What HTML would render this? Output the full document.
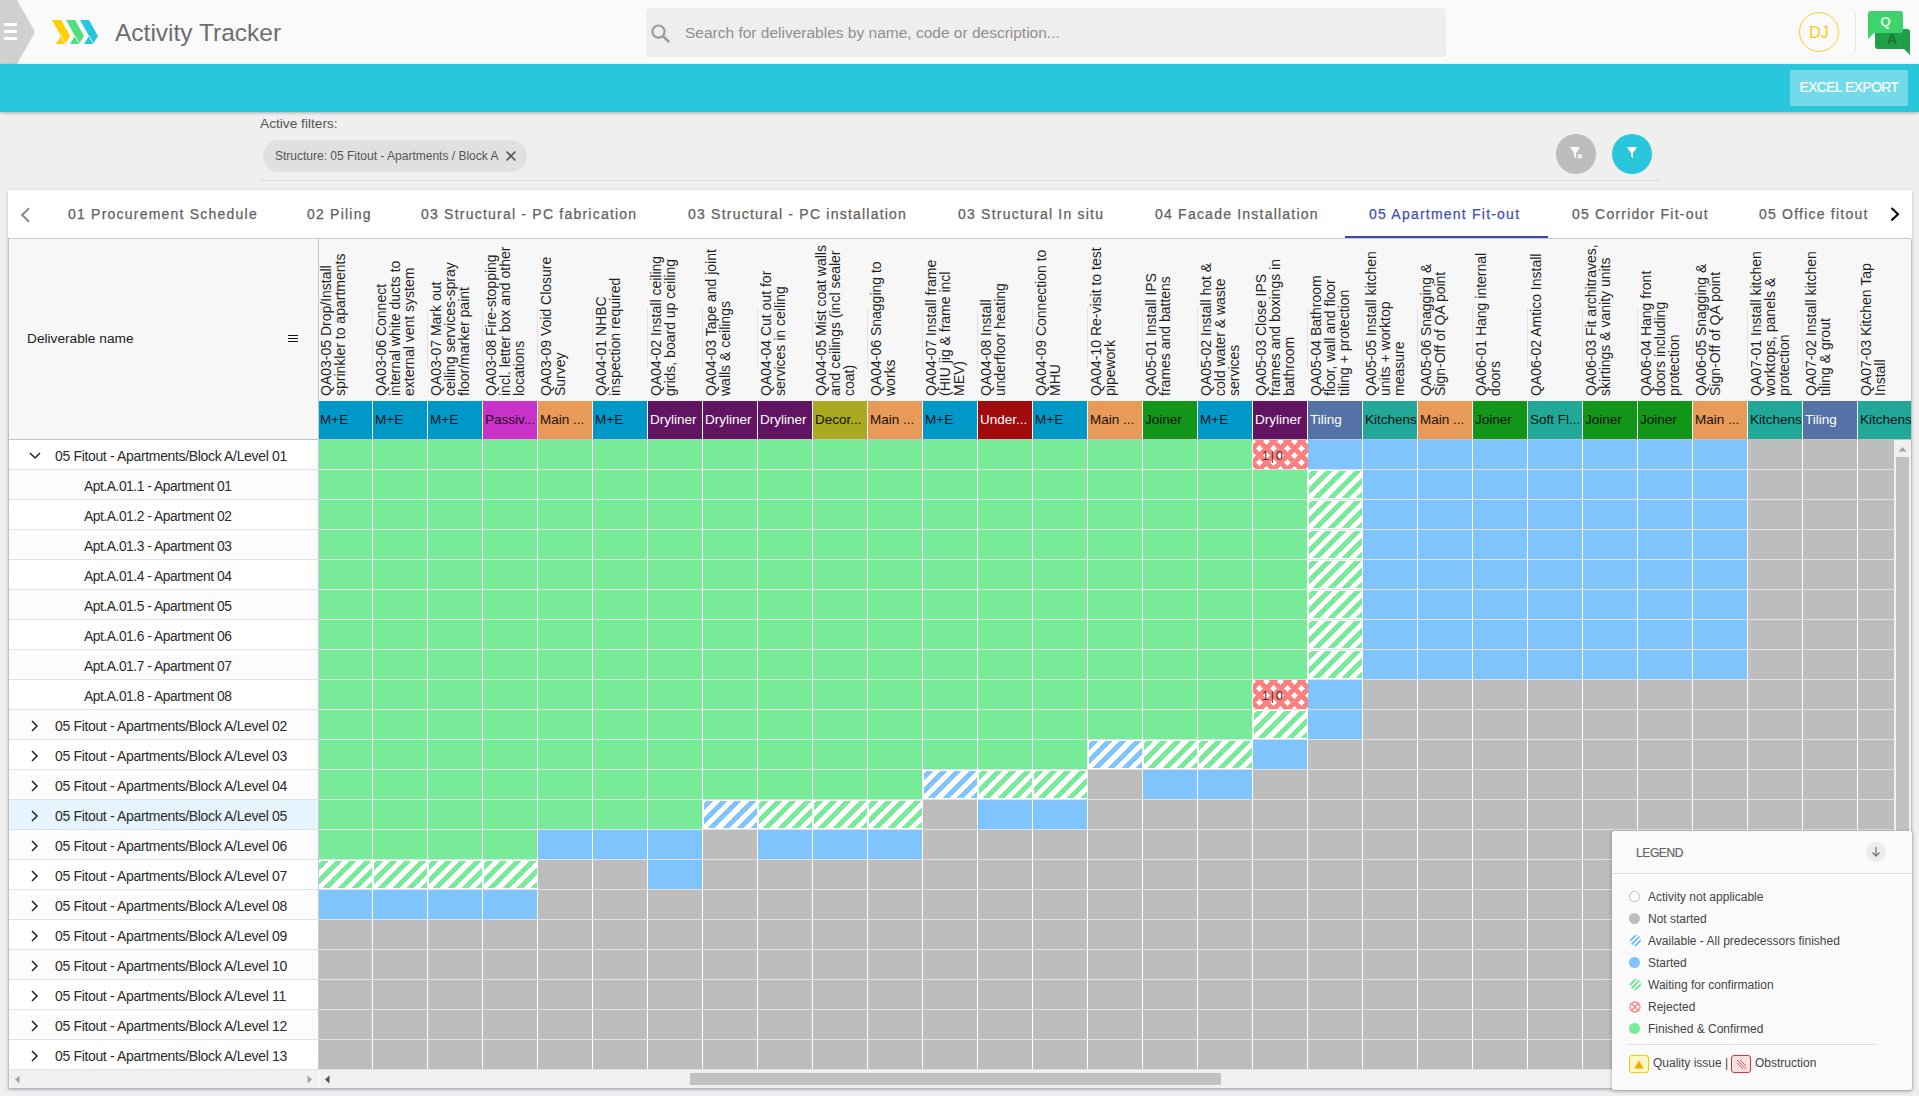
<!DOCTYPE html>
<html><head><meta charset="utf-8">
<style>
*{box-sizing:border-box}
html,body{margin:0;padding:0}
body{width:1919px;height:1096px;overflow:hidden;position:relative;background:#efefef;font-family:"Liberation Sans",sans-serif;color:#333}
.abs{position:absolute}
#top{position:absolute;left:0;top:0;width:1919px;height:64px;background:#fafafa}
#title{position:absolute;left:115px;top:19px;font-size:24.5px;color:#6e6e6e;white-space:nowrap}
#search{position:absolute;left:646px;top:8px;width:800px;height:49px;background:#eeeeee;border-radius:4px}
#search .ph{position:absolute;left:39px;top:16px;font-size:15.5px;color:#8f8f8f;white-space:nowrap}
#avatar{position:absolute;left:1799px;top:12px;width:40px;height:40px;border:1px solid #fdd017;border-radius:50%;color:#f9c80e;font-size:16px;text-align:center;line-height:40px}
#vsep{position:absolute;left:1855px;top:12px;width:1px;height:40px;background:#e6e6e6}
#teal{position:absolute;left:0;top:64px;width:1919px;height:48px;background:#28c7dc;box-shadow:0 1px 3px rgba(0,0,0,.28)}
#excel{position:absolute;left:1790px;top:6px;width:118px;height:36px;background:#72dae9;border-radius:2px;color:#fff;font-size:13.8px;text-align:center;line-height:35px;letter-spacing:-0.5px;-webkit-text-stroke:0.2px #fff}
#af{position:absolute;left:260px;top:116px;font-size:13.7px;color:#555;white-space:nowrap}
#chip{position:absolute;left:263px;top:140px;width:264px;height:32px;background:#e0e0e0;border-radius:16px}
#chip span{position:absolute;left:12px;top:9px;font-size:12px;color:#555;white-space:nowrap}
#fline{position:absolute;left:260px;top:180px;width:1400px;height:1px;background:#dcdcdc}
.fbtn{position:absolute;top:134px;width:40px;height:40px;border-radius:50%}
#card{position:absolute;left:8px;top:190px;width:1904px;height:899px;background:#fff;border-radius:2px;box-shadow:0 1px 3px rgba(0,0,0,.25)}
.tab{position:absolute;top:206px;font-size:14px;font-weight:normal;color:#616161;-webkit-text-stroke:0.25px currentColor;letter-spacing:1.22px;white-space:nowrap}
#ul{position:absolute;left:1345px;top:236px;width:203px;height:2px;background:#3949ab}
#thead{position:absolute;left:8px;top:238px;width:1903px;height:201px;background:#f7f7f7;border-top:1px solid #c5c9d1}
#hb{position:absolute;left:8px;top:439px;width:1903px;height:1px;background:#bfc3ca}
#lpb{position:absolute;left:318px;top:239px;width:1px;height:831px;background:#c5c9d1}
#lb{position:absolute;left:8px;top:239px;width:1px;height:850px;background:#bcc2cc}
#rb{position:absolute;left:1911px;top:239px;width:1px;height:850px;background:#bcc2cc}
#bb{position:absolute;left:8px;top:1088px;width:1904px;height:1px;background:#b4bac4}
#dn{position:absolute;left:27px;top:331px;font-size:13.7px;color:#222;white-space:nowrap}
#grid{position:absolute;left:318px;top:239px;width:1593px;height:831px;overflow:hidden}
.hcol{position:absolute;top:0;width:55px;height:162px}
.rot{position:absolute;left:0;top:162px;transform-origin:0 0;transform:rotate(-90deg);white-space:nowrap;font-size:14px;line-height:14px;color:#1e1e1e;width:160px;padding-top:1px;padding-left:5px}
.hsep{position:absolute;top:70px;width:1px;height:60px;background:#dfe1ea}
.trd{position:absolute;top:162px;width:54px;height:38px;font-size:13.5px;line-height:38px;padding-left:2px;white-space:nowrap;overflow:hidden}
#cells{position:absolute;left:0;top:201px;width:1576px;height:630px;background:#dfe2e8;overflow:hidden}
.c{position:absolute;display:block;width:55px;height:29px;border-right:1px solid #fff;font-style:normal}
.c.g{background:#78eb99}
.c.b{background:#7fc4fd}
.c.x{background:#bdbdbd}
.c.gh,.c.bh{background-color:#fff}
.c.gh::after,.c.bh::after{content:"";position:absolute;left:1px;top:1px;right:0;bottom:1px}
.c.gh::after{background:repeating-linear-gradient(135deg,#fff 0 2.12px,#78eb99 2.12px 7.07px,#fff 7.07px 9.9px)}
.c.bh::after{background:repeating-linear-gradient(135deg,#fff 0 2.12px,#7fc4fd 2.12px 7.07px,#fff 7.07px 9.9px)}
.c.r{border-right:0;background:repeating-linear-gradient(135deg,transparent 0 3.18px,#ff7f7f 3.18px 8.13px,transparent 8.13px 9.9px),repeating-linear-gradient(45deg,transparent 0 1.77px,#ff7f7f 1.77px 6.72px,transparent 6.72px 9.9px),#fff}
.rt{position:absolute;left:9px;top:9px;font-size:12.5px;color:#3a3a3a;letter-spacing:1.8px;white-space:nowrap}
.lrow{position:absolute;left:9px;width:309px;height:30px;background:#fff;border-bottom:1px solid #dfe2e8}
.lrow.alt{background:#fcfcfc}
.lrow.hl{background:#e6f4fe}
.lt{position:absolute;top:8px;font-size:14px;letter-spacing:-0.34px;color:#2b2b2b;white-space:nowrap}
.chev{position:absolute;left:20px;top:9px}
#lrows{position:absolute;left:0;top:440px}
#vs{position:absolute;left:1894px;top:440px;width:17px;height:630px;background:#f0f0f0}
#hs1{position:absolute;left:9px;top:1070px;width:309px;height:18px;background:#f0f0f0}
#hs2{position:absolute;left:319px;top:1070px;width:1592px;height:18px;background:#f0f0f0}
#legend{position:absolute;left:1612px;top:831px;width:300px;height:259px;background:#fafafa;box-shadow:0 1px 4px rgba(0,0,0,.3);border-radius:2px}
#legend .lh{position:absolute;left:24px;top:15px;font-size:12px;color:#666;letter-spacing:-0.4px;-webkit-text-stroke:0.2px #666}
#legend .li{position:absolute;left:36px;font-size:12px;color:#444;white-space:nowrap}
#legend .dot{position:absolute;left:17px;width:11px;height:11px;border-radius:50%}
</style></head><body>
<div id="top">
  <svg class="abs" style="left:0;top:0" width="36" height="64" viewBox="0 0 36 64"><polygon points="0,0 17,0 35,32 17,64 0,64" fill="#d0d0d0"/><rect x="4" y="23" width="13" height="3" fill="#fff"/><rect x="4" y="30" width="13" height="3" fill="#fff"/><rect x="4" y="37" width="13" height="3" fill="#fff"/></svg>
  <svg class="abs" style="left:50px;top:18px" width="50" height="28" viewBox="0 0 50 28">
    <polygon points="2,2 11,2 20,18 15,26 6,26 11,18" fill="#ffd000"/>
    <polygon points="16,2 25,2 34,18 29,26 20,26 25,18" fill="#50e080"/>
    <polygon points="30,2 39,2 48,18 43,26 34,26 39,18" fill="#29c6dc"/>
    <path d="M11 18 L15.5 26 M25 18 L29.5 26 M39 18 L43.5 26" stroke="#fafafa" stroke-width="0.9"/>
  </svg>
  <div id="title">Activity Tracker</div>
  <div id="search">
    <svg class="abs" style="left:5px;top:15px" width="22" height="22" viewBox="0 0 22 22"><circle cx="7.5" cy="8.6" r="6.1" fill="none" stroke="#9a9a9a" stroke-width="2.2"/><line x1="11.8" y1="13" x2="18.2" y2="19.2" stroke="#9a9a9a" stroke-width="2.5"/></svg>
    <div class="ph">Search for deliverables by name, code or description...</div>
  </div>
  <div id="avatar">DJ</div>
  <div id="vsep"></div>
  <svg class="abs" style="left:1866px;top:10px" width="46" height="46" viewBox="0 0 46 46">
    <path d="M12 19 h29 a3 3 0 0 1 3 3 v23 l-6 -6 h-26 a3 3 0 0 1 -3 -3 v-14 a3 3 0 0 1 3 -3 z" fill="#1f9f47"/>
    <path d="M5 1 h29 a3 3 0 0 1 3 3 v16 a3 3 0 0 1 -3 3 h-26 l-6 6 v-25 a3 3 0 0 1 3 -3 z" fill="#3fd46b"/>
    <text x="19.5" y="15.5" font-size="13.5" font-weight="bold" fill="#d8f7df" text-anchor="middle" font-family="Liberation Sans">Q</text>
    <text x="26" y="33.5" font-size="14" font-weight="bold" fill="#167434" text-anchor="middle" font-family="Liberation Sans">A</text>
  </svg>
</div>
<div id="teal"><div id="excel">EXCEL EXPORT</div></div>
<div id="af">Active filters:</div>
<div id="chip"><span>Structure: 05 Fitout - Apartments / Block A</span>
  <svg class="abs" style="left:242px;top:10px" width="12" height="12" viewBox="0 0 12 12"><path d="M1.5 1.5 L10.5 10.5 M10.5 1.5 L1.5 10.5" stroke="#555" stroke-width="1.6"/></svg></div>
<div id="fline"></div>
<div class="fbtn" style="left:1556px;background:#bdbdbd"><svg class="abs" style="left:10px;top:11px" width="20" height="18" viewBox="0 0 20 18"><path d="M4 2 H14 L10 8 V13 L8 11.5 V8 Z" fill="#fff"/><path d="M11.8 9.3 l4 4 M15.8 9.3 l-4 4" stroke="#fff" stroke-width="1.3"/></svg></div>
<div class="fbtn" style="left:1612px;background:#29c6dc"><svg class="abs" style="left:10px;top:11px" width="20" height="18" viewBox="0 0 20 18"><path d="M5 2 H15 L11 8 V13 L9 11.5 V8 Z" fill="#fff"/></svg></div>
<div id="card"></div>
<svg class="abs" style="left:18px;top:205px" width="16" height="18" viewBox="0 0 16 18"><path d="M11 3.2 L4.2 10 L11 16.8" fill="none" stroke="#8a8a8a" stroke-width="2"/></svg>
<div class="tab" style="left:68px">01 Procurement Schedule</div>
<div class="tab" style="left:307px">02 Piling</div>
<div class="tab" style="left:421px">03 Structural - PC fabrication</div>
<div class="tab" style="left:688px">03 Structural - PC installation</div>
<div class="tab" style="left:958px">03 Structural In situ</div>
<div class="tab" style="left:1155px">04 Facade Installation</div>
<div class="tab" style="left:1369px;color:#3f51b5">05 Apartment Fit-out</div>
<div class="tab" style="left:1572px">05 Corridor Fit-out</div>
<div class="tab" style="left:1759px">05 Office fitout</div>
<svg class="abs" style="left:1886px;top:205px" width="16" height="18" viewBox="0 0 16 18"><path d="M5.5 3 L12 9.2 L5.5 15.4" fill="none" stroke="#111" stroke-width="2.2"/></svg>
<div id="ul"></div>
<div id="thead"></div>
<div id="dn">Deliverable name</div>
<svg class="abs" style="left:288px;top:334px" width="10" height="9" viewBox="0 0 10 9"><rect x="0" y="1" width="10" height="1" fill="#111"/><rect x="0" y="4" width="10" height="1" fill="#111"/><rect x="0" y="7" width="10" height="1" fill="#111"/></svg>
<div id="lrows">
<div class="lrow" style="top:0px"><svg class="chev" width="12" height="12" viewBox="0 0 12 12"><path d="M1 4 L6 9 L11 4" fill="none" stroke="#222" stroke-width="1.5"/></svg><span class="lt" style="left:46px">05 Fitout - Apartments/Block A/Level 01</span></div>
<div class="lrow alt" style="top:30px"><span class="lt" style="left:75px;top:9px;font-size:13.8px;letter-spacing:-0.45px">Apt.A.01.1 - Apartment 01</span></div>
<div class="lrow" style="top:60px"><span class="lt" style="left:75px;top:9px;font-size:13.8px;letter-spacing:-0.45px">Apt.A.01.2 - Apartment 02</span></div>
<div class="lrow alt" style="top:90px"><span class="lt" style="left:75px;top:9px;font-size:13.8px;letter-spacing:-0.45px">Apt.A.01.3 - Apartment 03</span></div>
<div class="lrow" style="top:120px"><span class="lt" style="left:75px;top:9px;font-size:13.8px;letter-spacing:-0.45px">Apt.A.01.4 - Apartment 04</span></div>
<div class="lrow alt" style="top:150px"><span class="lt" style="left:75px;top:9px;font-size:13.8px;letter-spacing:-0.45px">Apt.A.01.5 - Apartment 05</span></div>
<div class="lrow" style="top:180px"><span class="lt" style="left:75px;top:9px;font-size:13.8px;letter-spacing:-0.45px">Apt.A.01.6 - Apartment 06</span></div>
<div class="lrow alt" style="top:210px"><span class="lt" style="left:75px;top:9px;font-size:13.8px;letter-spacing:-0.45px">Apt.A.01.7 - Apartment 07</span></div>
<div class="lrow" style="top:240px"><span class="lt" style="left:75px;top:9px;font-size:13.8px;letter-spacing:-0.45px">Apt.A.01.8 - Apartment 08</span></div>
<div class="lrow alt" style="top:270px"><svg class="chev" width="12" height="12" viewBox="0 0 12 12" style="top:10px"><path d="M3 1 L8 6 L3 11" fill="none" stroke="#222" stroke-width="1.5"/></svg><span class="lt" style="left:46px">05 Fitout - Apartments/Block A/Level 02</span></div>
<div class="lrow" style="top:300px"><svg class="chev" width="12" height="12" viewBox="0 0 12 12" style="top:10px"><path d="M3 1 L8 6 L3 11" fill="none" stroke="#222" stroke-width="1.5"/></svg><span class="lt" style="left:46px">05 Fitout - Apartments/Block A/Level 03</span></div>
<div class="lrow alt" style="top:330px"><svg class="chev" width="12" height="12" viewBox="0 0 12 12" style="top:10px"><path d="M3 1 L8 6 L3 11" fill="none" stroke="#222" stroke-width="1.5"/></svg><span class="lt" style="left:46px">05 Fitout - Apartments/Block A/Level 04</span></div>
<div class="lrow hl" style="top:360px"><svg class="chev" width="12" height="12" viewBox="0 0 12 12" style="top:10px"><path d="M3 1 L8 6 L3 11" fill="none" stroke="#222" stroke-width="1.5"/></svg><span class="lt" style="left:46px">05 Fitout - Apartments/Block A/Level 05</span></div>
<div class="lrow alt" style="top:390px"><svg class="chev" width="12" height="12" viewBox="0 0 12 12" style="top:10px"><path d="M3 1 L8 6 L3 11" fill="none" stroke="#222" stroke-width="1.5"/></svg><span class="lt" style="left:46px">05 Fitout - Apartments/Block A/Level 06</span></div>
<div class="lrow" style="top:420px"><svg class="chev" width="12" height="12" viewBox="0 0 12 12" style="top:10px"><path d="M3 1 L8 6 L3 11" fill="none" stroke="#222" stroke-width="1.5"/></svg><span class="lt" style="left:46px">05 Fitout - Apartments/Block A/Level 07</span></div>
<div class="lrow alt" style="top:450px"><svg class="chev" width="12" height="12" viewBox="0 0 12 12" style="top:10px"><path d="M3 1 L8 6 L3 11" fill="none" stroke="#222" stroke-width="1.5"/></svg><span class="lt" style="left:46px">05 Fitout - Apartments/Block A/Level 08</span></div>
<div class="lrow" style="top:480px"><svg class="chev" width="12" height="12" viewBox="0 0 12 12" style="top:10px"><path d="M3 1 L8 6 L3 11" fill="none" stroke="#222" stroke-width="1.5"/></svg><span class="lt" style="left:46px">05 Fitout - Apartments/Block A/Level 09</span></div>
<div class="lrow alt" style="top:510px"><svg class="chev" width="12" height="12" viewBox="0 0 12 12" style="top:10px"><path d="M3 1 L8 6 L3 11" fill="none" stroke="#222" stroke-width="1.5"/></svg><span class="lt" style="left:46px">05 Fitout - Apartments/Block A/Level 10</span></div>
<div class="lrow" style="top:540px"><svg class="chev" width="12" height="12" viewBox="0 0 12 12" style="top:10px"><path d="M3 1 L8 6 L3 11" fill="none" stroke="#222" stroke-width="1.5"/></svg><span class="lt" style="left:46px">05 Fitout - Apartments/Block A/Level 11</span></div>
<div class="lrow alt" style="top:570px"><svg class="chev" width="12" height="12" viewBox="0 0 12 12" style="top:10px"><path d="M3 1 L8 6 L3 11" fill="none" stroke="#222" stroke-width="1.5"/></svg><span class="lt" style="left:46px">05 Fitout - Apartments/Block A/Level 12</span></div>
<div class="lrow" style="top:600px"><svg class="chev" width="12" height="12" viewBox="0 0 12 12" style="top:10px"><path d="M3 1 L8 6 L3 11" fill="none" stroke="#222" stroke-width="1.5"/></svg><span class="lt" style="left:46px">05 Fitout - Apartments/Block A/Level 13</span></div>
</div>
<div id="grid">
<div class="hcol" style="left:0px"><div class="rot">QA03-05 Drop/Install<br>sprinkler to apartments</div></div>
<div class="trd" style="left:0px;background:#0099c7;color:#0b1620">M+E</div>
<div class="hcol" style="left:55px"><div class="rot">QA03-06 Connect<br>internal white ducts to<br>external vent system</div></div>
<div class="hsep" style="left:54px"></div>
<div class="trd" style="left:55px;background:#0099c7;color:#0b1620">M+E</div>
<div class="hcol" style="left:110px"><div class="rot">QA03-07 Mark out<br>ceiling services-spray<br>floor/marker paint</div></div>
<div class="hsep" style="left:109px"></div>
<div class="trd" style="left:110px;background:#0099c7;color:#0b1620">M+E</div>
<div class="hcol" style="left:165px"><div class="rot">QA03-08 Fire-stopping<br>incl. letter box and other<br>locations</div></div>
<div class="hsep" style="left:164px"></div>
<div class="trd" style="left:165px;background:#c932c9;color:#1a0a1a">Passiv...</div>
<div class="hcol" style="left:220px"><div class="rot">QA03-09 Void Closure<br>Survey</div></div>
<div class="hsep" style="left:219px"></div>
<div class="trd" style="left:220px;background:#e89a58;color:#1a1208">Main ...</div>
<div class="hcol" style="left:275px"><div class="rot">QA04-01 NHBC<br>inspection required</div></div>
<div class="hsep" style="left:274px"></div>
<div class="trd" style="left:275px;background:#0099c7;color:#0b1620">M+E</div>
<div class="hcol" style="left:330px"><div class="rot">QA04-02 Install ceiling<br>grids, board up ceiling</div></div>
<div class="hsep" style="left:329px"></div>
<div class="trd" style="left:330px;background:#601461;color:#ffffff">Dryliner</div>
<div class="hcol" style="left:385px"><div class="rot">QA04-03 Tape and joint<br>walls &amp; ceilings</div></div>
<div class="hsep" style="left:384px"></div>
<div class="trd" style="left:385px;background:#601461;color:#ffffff">Dryliner</div>
<div class="hcol" style="left:440px"><div class="rot">QA04-04 Cut out for<br>services in ceiling</div></div>
<div class="hsep" style="left:439px"></div>
<div class="trd" style="left:440px;background:#601461;color:#ffffff">Dryliner</div>
<div class="hcol" style="left:495px"><div class="rot">QA04-05 Mist coat walls<br>and ceilings (incl sealer<br>coat)</div></div>
<div class="hsep" style="left:494px"></div>
<div class="trd" style="left:495px;background:#a9a922;color:#141400">Decor...</div>
<div class="hcol" style="left:550px"><div class="rot">QA04-06 Snagging to<br>works</div></div>
<div class="hsep" style="left:549px"></div>
<div class="trd" style="left:550px;background:#e89a58;color:#1a1208">Main ...</div>
<div class="hcol" style="left:605px"><div class="rot">QA04-07 Install frame<br>(HIU jig &amp; frame incl<br>MEV)</div></div>
<div class="hsep" style="left:604px"></div>
<div class="trd" style="left:605px;background:#0099c7;color:#0b1620">M+E</div>
<div class="hcol" style="left:660px"><div class="rot">QA04-08 Install<br>underfloor heating</div></div>
<div class="hsep" style="left:659px"></div>
<div class="trd" style="left:660px;background:#a00c0e;color:#ffffff">Under...</div>
<div class="hcol" style="left:715px"><div class="rot">QA04-09 Connection to<br>MHU</div></div>
<div class="hsep" style="left:714px"></div>
<div class="trd" style="left:715px;background:#0099c7;color:#0b1620">M+E</div>
<div class="hcol" style="left:770px"><div class="rot">QA04-10 Re-visit to test<br>pipework</div></div>
<div class="hsep" style="left:769px"></div>
<div class="trd" style="left:770px;background:#e89a58;color:#1a1208">Main ...</div>
<div class="hcol" style="left:825px"><div class="rot">QA05-01 Install IPS<br>frames and battens</div></div>
<div class="hsep" style="left:824px"></div>
<div class="trd" style="left:825px;background:#12961a;color:#061206">Joiner</div>
<div class="hcol" style="left:880px"><div class="rot">QA05-02 Install hot &amp;<br>cold water &amp; waste<br>services</div></div>
<div class="hsep" style="left:879px"></div>
<div class="trd" style="left:880px;background:#0099c7;color:#0b1620">M+E</div>
<div class="hcol" style="left:935px"><div class="rot">QA05-03 Close IPS<br>frames and boxings in<br>bathroom</div></div>
<div class="hsep" style="left:934px"></div>
<div class="trd" style="left:935px;background:#601461;color:#ffffff">Dryliner</div>
<div class="hcol" style="left:990px"><div class="rot">QA05-04 Bathroom<br>floor, wall and floor<br>tiling + protection</div></div>
<div class="hsep" style="left:989px"></div>
<div class="trd" style="left:990px;background:#5472a5;color:#ffffff">Tiling</div>
<div class="hcol" style="left:1045px"><div class="rot">QA05-05 Install kitchen<br>units + worktop<br>measure</div></div>
<div class="hsep" style="left:1044px"></div>
<div class="trd" style="left:1045px;background:#22a898;color:#041412">Kitchens</div>
<div class="hcol" style="left:1100px"><div class="rot">QA05-06 Snagging &amp;<br>Sign-Off of QA point</div></div>
<div class="hsep" style="left:1099px"></div>
<div class="trd" style="left:1100px;background:#e89a58;color:#1a1208">Main ...</div>
<div class="hcol" style="left:1155px"><div class="rot">QA06-01 Hang internal<br>doors</div></div>
<div class="hsep" style="left:1154px"></div>
<div class="trd" style="left:1155px;background:#12961a;color:#061206">Joiner</div>
<div class="hcol" style="left:1210px"><div class="rot">QA06-02 Amtico Install</div></div>
<div class="hsep" style="left:1209px"></div>
<div class="trd" style="left:1210px;background:#22a898;color:#041412">Soft Fl...</div>
<div class="hcol" style="left:1265px"><div class="rot">QA06-03 Fit architraves,<br>skirtings &amp; vanity units</div></div>
<div class="hsep" style="left:1264px"></div>
<div class="trd" style="left:1265px;background:#12961a;color:#061206">Joiner</div>
<div class="hcol" style="left:1320px"><div class="rot">QA06-04 Hang front<br>doors including<br>protection</div></div>
<div class="hsep" style="left:1319px"></div>
<div class="trd" style="left:1320px;background:#12961a;color:#061206">Joiner</div>
<div class="hcol" style="left:1375px"><div class="rot">QA06-05 Snagging &amp;<br>Sign-Off of QA point</div></div>
<div class="hsep" style="left:1374px"></div>
<div class="trd" style="left:1375px;background:#e89a58;color:#1a1208">Main ...</div>
<div class="hcol" style="left:1430px"><div class="rot">QA07-01 Install kitchen<br>worktops, panels &amp;<br>protection</div></div>
<div class="hsep" style="left:1429px"></div>
<div class="trd" style="left:1430px;background:#22a898;color:#041412">Kitchens</div>
<div class="hcol" style="left:1485px"><div class="rot">QA07-02 Install kitchen<br>tiling &amp; grout</div></div>
<div class="hsep" style="left:1484px"></div>
<div class="trd" style="left:1485px;background:#5472a5;color:#ffffff">Tiling</div>
<div class="hcol" style="left:1540px"><div class="rot">QA07-03 Kitchen Tap<br>Install</div></div>
<div class="hsep" style="left:1539px"></div>
<div class="trd" style="left:1540px;background:#22a898;color:#041412">Kitchens</div>
<div id="cells">
<i class="c g" style="left:0px;top:0px"></i>
<i class="c g" style="left:55px;top:0px"></i>
<i class="c g" style="left:110px;top:0px"></i>
<i class="c g" style="left:165px;top:0px"></i>
<i class="c g" style="left:220px;top:0px"></i>
<i class="c g" style="left:275px;top:0px"></i>
<i class="c g" style="left:330px;top:0px"></i>
<i class="c g" style="left:385px;top:0px"></i>
<i class="c g" style="left:440px;top:0px"></i>
<i class="c g" style="left:495px;top:0px"></i>
<i class="c g" style="left:550px;top:0px"></i>
<i class="c g" style="left:605px;top:0px"></i>
<i class="c g" style="left:660px;top:0px"></i>
<i class="c g" style="left:715px;top:0px"></i>
<i class="c g" style="left:770px;top:0px"></i>
<i class="c g" style="left:825px;top:0px"></i>
<i class="c g" style="left:880px;top:0px"></i>
<i class="c r" style="left:935px;top:0px"><span class="rt">1|0</span></i>
<i class="c b" style="left:990px;top:0px"></i>
<i class="c b" style="left:1045px;top:0px"></i>
<i class="c b" style="left:1100px;top:0px"></i>
<i class="c b" style="left:1155px;top:0px"></i>
<i class="c b" style="left:1210px;top:0px"></i>
<i class="c b" style="left:1265px;top:0px"></i>
<i class="c b" style="left:1320px;top:0px"></i>
<i class="c b" style="left:1375px;top:0px"></i>
<i class="c x" style="left:1430px;top:0px"></i>
<i class="c x" style="left:1485px;top:0px"></i>
<i class="c x" style="left:1540px;top:0px"></i>
<i class="c g" style="left:0px;top:30px"></i>
<i class="c g" style="left:55px;top:30px"></i>
<i class="c g" style="left:110px;top:30px"></i>
<i class="c g" style="left:165px;top:30px"></i>
<i class="c g" style="left:220px;top:30px"></i>
<i class="c g" style="left:275px;top:30px"></i>
<i class="c g" style="left:330px;top:30px"></i>
<i class="c g" style="left:385px;top:30px"></i>
<i class="c g" style="left:440px;top:30px"></i>
<i class="c g" style="left:495px;top:30px"></i>
<i class="c g" style="left:550px;top:30px"></i>
<i class="c g" style="left:605px;top:30px"></i>
<i class="c g" style="left:660px;top:30px"></i>
<i class="c g" style="left:715px;top:30px"></i>
<i class="c g" style="left:770px;top:30px"></i>
<i class="c g" style="left:825px;top:30px"></i>
<i class="c g" style="left:880px;top:30px"></i>
<i class="c g" style="left:935px;top:30px"></i>
<i class="c gh" style="left:990px;top:30px"></i>
<i class="c b" style="left:1045px;top:30px"></i>
<i class="c b" style="left:1100px;top:30px"></i>
<i class="c b" style="left:1155px;top:30px"></i>
<i class="c b" style="left:1210px;top:30px"></i>
<i class="c b" style="left:1265px;top:30px"></i>
<i class="c b" style="left:1320px;top:30px"></i>
<i class="c b" style="left:1375px;top:30px"></i>
<i class="c x" style="left:1430px;top:30px"></i>
<i class="c x" style="left:1485px;top:30px"></i>
<i class="c x" style="left:1540px;top:30px"></i>
<i class="c g" style="left:0px;top:60px"></i>
<i class="c g" style="left:55px;top:60px"></i>
<i class="c g" style="left:110px;top:60px"></i>
<i class="c g" style="left:165px;top:60px"></i>
<i class="c g" style="left:220px;top:60px"></i>
<i class="c g" style="left:275px;top:60px"></i>
<i class="c g" style="left:330px;top:60px"></i>
<i class="c g" style="left:385px;top:60px"></i>
<i class="c g" style="left:440px;top:60px"></i>
<i class="c g" style="left:495px;top:60px"></i>
<i class="c g" style="left:550px;top:60px"></i>
<i class="c g" style="left:605px;top:60px"></i>
<i class="c g" style="left:660px;top:60px"></i>
<i class="c g" style="left:715px;top:60px"></i>
<i class="c g" style="left:770px;top:60px"></i>
<i class="c g" style="left:825px;top:60px"></i>
<i class="c g" style="left:880px;top:60px"></i>
<i class="c g" style="left:935px;top:60px"></i>
<i class="c gh" style="left:990px;top:60px"></i>
<i class="c b" style="left:1045px;top:60px"></i>
<i class="c b" style="left:1100px;top:60px"></i>
<i class="c b" style="left:1155px;top:60px"></i>
<i class="c b" style="left:1210px;top:60px"></i>
<i class="c b" style="left:1265px;top:60px"></i>
<i class="c b" style="left:1320px;top:60px"></i>
<i class="c b" style="left:1375px;top:60px"></i>
<i class="c x" style="left:1430px;top:60px"></i>
<i class="c x" style="left:1485px;top:60px"></i>
<i class="c x" style="left:1540px;top:60px"></i>
<i class="c g" style="left:0px;top:90px"></i>
<i class="c g" style="left:55px;top:90px"></i>
<i class="c g" style="left:110px;top:90px"></i>
<i class="c g" style="left:165px;top:90px"></i>
<i class="c g" style="left:220px;top:90px"></i>
<i class="c g" style="left:275px;top:90px"></i>
<i class="c g" style="left:330px;top:90px"></i>
<i class="c g" style="left:385px;top:90px"></i>
<i class="c g" style="left:440px;top:90px"></i>
<i class="c g" style="left:495px;top:90px"></i>
<i class="c g" style="left:550px;top:90px"></i>
<i class="c g" style="left:605px;top:90px"></i>
<i class="c g" style="left:660px;top:90px"></i>
<i class="c g" style="left:715px;top:90px"></i>
<i class="c g" style="left:770px;top:90px"></i>
<i class="c g" style="left:825px;top:90px"></i>
<i class="c g" style="left:880px;top:90px"></i>
<i class="c g" style="left:935px;top:90px"></i>
<i class="c gh" style="left:990px;top:90px"></i>
<i class="c b" style="left:1045px;top:90px"></i>
<i class="c b" style="left:1100px;top:90px"></i>
<i class="c b" style="left:1155px;top:90px"></i>
<i class="c b" style="left:1210px;top:90px"></i>
<i class="c b" style="left:1265px;top:90px"></i>
<i class="c b" style="left:1320px;top:90px"></i>
<i class="c b" style="left:1375px;top:90px"></i>
<i class="c x" style="left:1430px;top:90px"></i>
<i class="c x" style="left:1485px;top:90px"></i>
<i class="c x" style="left:1540px;top:90px"></i>
<i class="c g" style="left:0px;top:120px"></i>
<i class="c g" style="left:55px;top:120px"></i>
<i class="c g" style="left:110px;top:120px"></i>
<i class="c g" style="left:165px;top:120px"></i>
<i class="c g" style="left:220px;top:120px"></i>
<i class="c g" style="left:275px;top:120px"></i>
<i class="c g" style="left:330px;top:120px"></i>
<i class="c g" style="left:385px;top:120px"></i>
<i class="c g" style="left:440px;top:120px"></i>
<i class="c g" style="left:495px;top:120px"></i>
<i class="c g" style="left:550px;top:120px"></i>
<i class="c g" style="left:605px;top:120px"></i>
<i class="c g" style="left:660px;top:120px"></i>
<i class="c g" style="left:715px;top:120px"></i>
<i class="c g" style="left:770px;top:120px"></i>
<i class="c g" style="left:825px;top:120px"></i>
<i class="c g" style="left:880px;top:120px"></i>
<i class="c g" style="left:935px;top:120px"></i>
<i class="c gh" style="left:990px;top:120px"></i>
<i class="c b" style="left:1045px;top:120px"></i>
<i class="c b" style="left:1100px;top:120px"></i>
<i class="c b" style="left:1155px;top:120px"></i>
<i class="c b" style="left:1210px;top:120px"></i>
<i class="c b" style="left:1265px;top:120px"></i>
<i class="c b" style="left:1320px;top:120px"></i>
<i class="c b" style="left:1375px;top:120px"></i>
<i class="c x" style="left:1430px;top:120px"></i>
<i class="c x" style="left:1485px;top:120px"></i>
<i class="c x" style="left:1540px;top:120px"></i>
<i class="c g" style="left:0px;top:150px"></i>
<i class="c g" style="left:55px;top:150px"></i>
<i class="c g" style="left:110px;top:150px"></i>
<i class="c g" style="left:165px;top:150px"></i>
<i class="c g" style="left:220px;top:150px"></i>
<i class="c g" style="left:275px;top:150px"></i>
<i class="c g" style="left:330px;top:150px"></i>
<i class="c g" style="left:385px;top:150px"></i>
<i class="c g" style="left:440px;top:150px"></i>
<i class="c g" style="left:495px;top:150px"></i>
<i class="c g" style="left:550px;top:150px"></i>
<i class="c g" style="left:605px;top:150px"></i>
<i class="c g" style="left:660px;top:150px"></i>
<i class="c g" style="left:715px;top:150px"></i>
<i class="c g" style="left:770px;top:150px"></i>
<i class="c g" style="left:825px;top:150px"></i>
<i class="c g" style="left:880px;top:150px"></i>
<i class="c g" style="left:935px;top:150px"></i>
<i class="c gh" style="left:990px;top:150px"></i>
<i class="c b" style="left:1045px;top:150px"></i>
<i class="c b" style="left:1100px;top:150px"></i>
<i class="c b" style="left:1155px;top:150px"></i>
<i class="c b" style="left:1210px;top:150px"></i>
<i class="c b" style="left:1265px;top:150px"></i>
<i class="c b" style="left:1320px;top:150px"></i>
<i class="c b" style="left:1375px;top:150px"></i>
<i class="c x" style="left:1430px;top:150px"></i>
<i class="c x" style="left:1485px;top:150px"></i>
<i class="c x" style="left:1540px;top:150px"></i>
<i class="c g" style="left:0px;top:180px"></i>
<i class="c g" style="left:55px;top:180px"></i>
<i class="c g" style="left:110px;top:180px"></i>
<i class="c g" style="left:165px;top:180px"></i>
<i class="c g" style="left:220px;top:180px"></i>
<i class="c g" style="left:275px;top:180px"></i>
<i class="c g" style="left:330px;top:180px"></i>
<i class="c g" style="left:385px;top:180px"></i>
<i class="c g" style="left:440px;top:180px"></i>
<i class="c g" style="left:495px;top:180px"></i>
<i class="c g" style="left:550px;top:180px"></i>
<i class="c g" style="left:605px;top:180px"></i>
<i class="c g" style="left:660px;top:180px"></i>
<i class="c g" style="left:715px;top:180px"></i>
<i class="c g" style="left:770px;top:180px"></i>
<i class="c g" style="left:825px;top:180px"></i>
<i class="c g" style="left:880px;top:180px"></i>
<i class="c g" style="left:935px;top:180px"></i>
<i class="c gh" style="left:990px;top:180px"></i>
<i class="c b" style="left:1045px;top:180px"></i>
<i class="c b" style="left:1100px;top:180px"></i>
<i class="c b" style="left:1155px;top:180px"></i>
<i class="c b" style="left:1210px;top:180px"></i>
<i class="c b" style="left:1265px;top:180px"></i>
<i class="c b" style="left:1320px;top:180px"></i>
<i class="c b" style="left:1375px;top:180px"></i>
<i class="c x" style="left:1430px;top:180px"></i>
<i class="c x" style="left:1485px;top:180px"></i>
<i class="c x" style="left:1540px;top:180px"></i>
<i class="c g" style="left:0px;top:210px"></i>
<i class="c g" style="left:55px;top:210px"></i>
<i class="c g" style="left:110px;top:210px"></i>
<i class="c g" style="left:165px;top:210px"></i>
<i class="c g" style="left:220px;top:210px"></i>
<i class="c g" style="left:275px;top:210px"></i>
<i class="c g" style="left:330px;top:210px"></i>
<i class="c g" style="left:385px;top:210px"></i>
<i class="c g" style="left:440px;top:210px"></i>
<i class="c g" style="left:495px;top:210px"></i>
<i class="c g" style="left:550px;top:210px"></i>
<i class="c g" style="left:605px;top:210px"></i>
<i class="c g" style="left:660px;top:210px"></i>
<i class="c g" style="left:715px;top:210px"></i>
<i class="c g" style="left:770px;top:210px"></i>
<i class="c g" style="left:825px;top:210px"></i>
<i class="c g" style="left:880px;top:210px"></i>
<i class="c g" style="left:935px;top:210px"></i>
<i class="c gh" style="left:990px;top:210px"></i>
<i class="c b" style="left:1045px;top:210px"></i>
<i class="c b" style="left:1100px;top:210px"></i>
<i class="c b" style="left:1155px;top:210px"></i>
<i class="c b" style="left:1210px;top:210px"></i>
<i class="c b" style="left:1265px;top:210px"></i>
<i class="c b" style="left:1320px;top:210px"></i>
<i class="c b" style="left:1375px;top:210px"></i>
<i class="c x" style="left:1430px;top:210px"></i>
<i class="c x" style="left:1485px;top:210px"></i>
<i class="c x" style="left:1540px;top:210px"></i>
<i class="c g" style="left:0px;top:240px"></i>
<i class="c g" style="left:55px;top:240px"></i>
<i class="c g" style="left:110px;top:240px"></i>
<i class="c g" style="left:165px;top:240px"></i>
<i class="c g" style="left:220px;top:240px"></i>
<i class="c g" style="left:275px;top:240px"></i>
<i class="c g" style="left:330px;top:240px"></i>
<i class="c g" style="left:385px;top:240px"></i>
<i class="c g" style="left:440px;top:240px"></i>
<i class="c g" style="left:495px;top:240px"></i>
<i class="c g" style="left:550px;top:240px"></i>
<i class="c g" style="left:605px;top:240px"></i>
<i class="c g" style="left:660px;top:240px"></i>
<i class="c g" style="left:715px;top:240px"></i>
<i class="c g" style="left:770px;top:240px"></i>
<i class="c g" style="left:825px;top:240px"></i>
<i class="c g" style="left:880px;top:240px"></i>
<i class="c r" style="left:935px;top:240px"><span class="rt">1|0</span></i>
<i class="c b" style="left:990px;top:240px"></i>
<i class="c x" style="left:1045px;top:240px"></i>
<i class="c x" style="left:1100px;top:240px"></i>
<i class="c x" style="left:1155px;top:240px"></i>
<i class="c x" style="left:1210px;top:240px"></i>
<i class="c x" style="left:1265px;top:240px"></i>
<i class="c x" style="left:1320px;top:240px"></i>
<i class="c x" style="left:1375px;top:240px"></i>
<i class="c x" style="left:1430px;top:240px"></i>
<i class="c x" style="left:1485px;top:240px"></i>
<i class="c x" style="left:1540px;top:240px"></i>
<i class="c g" style="left:0px;top:270px"></i>
<i class="c g" style="left:55px;top:270px"></i>
<i class="c g" style="left:110px;top:270px"></i>
<i class="c g" style="left:165px;top:270px"></i>
<i class="c g" style="left:220px;top:270px"></i>
<i class="c g" style="left:275px;top:270px"></i>
<i class="c g" style="left:330px;top:270px"></i>
<i class="c g" style="left:385px;top:270px"></i>
<i class="c g" style="left:440px;top:270px"></i>
<i class="c g" style="left:495px;top:270px"></i>
<i class="c g" style="left:550px;top:270px"></i>
<i class="c g" style="left:605px;top:270px"></i>
<i class="c g" style="left:660px;top:270px"></i>
<i class="c g" style="left:715px;top:270px"></i>
<i class="c g" style="left:770px;top:270px"></i>
<i class="c g" style="left:825px;top:270px"></i>
<i class="c g" style="left:880px;top:270px"></i>
<i class="c gh" style="left:935px;top:270px"></i>
<i class="c b" style="left:990px;top:270px"></i>
<i class="c x" style="left:1045px;top:270px"></i>
<i class="c x" style="left:1100px;top:270px"></i>
<i class="c x" style="left:1155px;top:270px"></i>
<i class="c x" style="left:1210px;top:270px"></i>
<i class="c x" style="left:1265px;top:270px"></i>
<i class="c x" style="left:1320px;top:270px"></i>
<i class="c x" style="left:1375px;top:270px"></i>
<i class="c x" style="left:1430px;top:270px"></i>
<i class="c x" style="left:1485px;top:270px"></i>
<i class="c x" style="left:1540px;top:270px"></i>
<i class="c g" style="left:0px;top:300px"></i>
<i class="c g" style="left:55px;top:300px"></i>
<i class="c g" style="left:110px;top:300px"></i>
<i class="c g" style="left:165px;top:300px"></i>
<i class="c g" style="left:220px;top:300px"></i>
<i class="c g" style="left:275px;top:300px"></i>
<i class="c g" style="left:330px;top:300px"></i>
<i class="c g" style="left:385px;top:300px"></i>
<i class="c g" style="left:440px;top:300px"></i>
<i class="c g" style="left:495px;top:300px"></i>
<i class="c g" style="left:550px;top:300px"></i>
<i class="c g" style="left:605px;top:300px"></i>
<i class="c g" style="left:660px;top:300px"></i>
<i class="c g" style="left:715px;top:300px"></i>
<i class="c bh" style="left:770px;top:300px"></i>
<i class="c gh" style="left:825px;top:300px"></i>
<i class="c gh" style="left:880px;top:300px"></i>
<i class="c b" style="left:935px;top:300px"></i>
<i class="c x" style="left:990px;top:300px"></i>
<i class="c x" style="left:1045px;top:300px"></i>
<i class="c x" style="left:1100px;top:300px"></i>
<i class="c x" style="left:1155px;top:300px"></i>
<i class="c x" style="left:1210px;top:300px"></i>
<i class="c x" style="left:1265px;top:300px"></i>
<i class="c x" style="left:1320px;top:300px"></i>
<i class="c x" style="left:1375px;top:300px"></i>
<i class="c x" style="left:1430px;top:300px"></i>
<i class="c x" style="left:1485px;top:300px"></i>
<i class="c x" style="left:1540px;top:300px"></i>
<i class="c g" style="left:0px;top:330px"></i>
<i class="c g" style="left:55px;top:330px"></i>
<i class="c g" style="left:110px;top:330px"></i>
<i class="c g" style="left:165px;top:330px"></i>
<i class="c g" style="left:220px;top:330px"></i>
<i class="c g" style="left:275px;top:330px"></i>
<i class="c g" style="left:330px;top:330px"></i>
<i class="c g" style="left:385px;top:330px"></i>
<i class="c g" style="left:440px;top:330px"></i>
<i class="c g" style="left:495px;top:330px"></i>
<i class="c g" style="left:550px;top:330px"></i>
<i class="c bh" style="left:605px;top:330px"></i>
<i class="c gh" style="left:660px;top:330px"></i>
<i class="c gh" style="left:715px;top:330px"></i>
<i class="c x" style="left:770px;top:330px"></i>
<i class="c b" style="left:825px;top:330px"></i>
<i class="c b" style="left:880px;top:330px"></i>
<i class="c x" style="left:935px;top:330px"></i>
<i class="c x" style="left:990px;top:330px"></i>
<i class="c x" style="left:1045px;top:330px"></i>
<i class="c x" style="left:1100px;top:330px"></i>
<i class="c x" style="left:1155px;top:330px"></i>
<i class="c x" style="left:1210px;top:330px"></i>
<i class="c x" style="left:1265px;top:330px"></i>
<i class="c x" style="left:1320px;top:330px"></i>
<i class="c x" style="left:1375px;top:330px"></i>
<i class="c x" style="left:1430px;top:330px"></i>
<i class="c x" style="left:1485px;top:330px"></i>
<i class="c x" style="left:1540px;top:330px"></i>
<i class="c g" style="left:0px;top:360px"></i>
<i class="c g" style="left:55px;top:360px"></i>
<i class="c g" style="left:110px;top:360px"></i>
<i class="c g" style="left:165px;top:360px"></i>
<i class="c g" style="left:220px;top:360px"></i>
<i class="c g" style="left:275px;top:360px"></i>
<i class="c g" style="left:330px;top:360px"></i>
<i class="c bh" style="left:385px;top:360px"></i>
<i class="c gh" style="left:440px;top:360px"></i>
<i class="c gh" style="left:495px;top:360px"></i>
<i class="c gh" style="left:550px;top:360px"></i>
<i class="c x" style="left:605px;top:360px"></i>
<i class="c b" style="left:660px;top:360px"></i>
<i class="c b" style="left:715px;top:360px"></i>
<i class="c x" style="left:770px;top:360px"></i>
<i class="c x" style="left:825px;top:360px"></i>
<i class="c x" style="left:880px;top:360px"></i>
<i class="c x" style="left:935px;top:360px"></i>
<i class="c x" style="left:990px;top:360px"></i>
<i class="c x" style="left:1045px;top:360px"></i>
<i class="c x" style="left:1100px;top:360px"></i>
<i class="c x" style="left:1155px;top:360px"></i>
<i class="c x" style="left:1210px;top:360px"></i>
<i class="c x" style="left:1265px;top:360px"></i>
<i class="c x" style="left:1320px;top:360px"></i>
<i class="c x" style="left:1375px;top:360px"></i>
<i class="c x" style="left:1430px;top:360px"></i>
<i class="c x" style="left:1485px;top:360px"></i>
<i class="c x" style="left:1540px;top:360px"></i>
<i class="c g" style="left:0px;top:390px"></i>
<i class="c g" style="left:55px;top:390px"></i>
<i class="c g" style="left:110px;top:390px"></i>
<i class="c g" style="left:165px;top:390px"></i>
<i class="c b" style="left:220px;top:390px"></i>
<i class="c b" style="left:275px;top:390px"></i>
<i class="c b" style="left:330px;top:390px"></i>
<i class="c x" style="left:385px;top:390px"></i>
<i class="c b" style="left:440px;top:390px"></i>
<i class="c b" style="left:495px;top:390px"></i>
<i class="c b" style="left:550px;top:390px"></i>
<i class="c x" style="left:605px;top:390px"></i>
<i class="c x" style="left:660px;top:390px"></i>
<i class="c x" style="left:715px;top:390px"></i>
<i class="c x" style="left:770px;top:390px"></i>
<i class="c x" style="left:825px;top:390px"></i>
<i class="c x" style="left:880px;top:390px"></i>
<i class="c x" style="left:935px;top:390px"></i>
<i class="c x" style="left:990px;top:390px"></i>
<i class="c x" style="left:1045px;top:390px"></i>
<i class="c x" style="left:1100px;top:390px"></i>
<i class="c x" style="left:1155px;top:390px"></i>
<i class="c x" style="left:1210px;top:390px"></i>
<i class="c x" style="left:1265px;top:390px"></i>
<i class="c x" style="left:1320px;top:390px"></i>
<i class="c x" style="left:1375px;top:390px"></i>
<i class="c x" style="left:1430px;top:390px"></i>
<i class="c x" style="left:1485px;top:390px"></i>
<i class="c x" style="left:1540px;top:390px"></i>
<i class="c gh" style="left:0px;top:420px"></i>
<i class="c gh" style="left:55px;top:420px"></i>
<i class="c gh" style="left:110px;top:420px"></i>
<i class="c gh" style="left:165px;top:420px"></i>
<i class="c x" style="left:220px;top:420px"></i>
<i class="c x" style="left:275px;top:420px"></i>
<i class="c b" style="left:330px;top:420px"></i>
<i class="c x" style="left:385px;top:420px"></i>
<i class="c x" style="left:440px;top:420px"></i>
<i class="c x" style="left:495px;top:420px"></i>
<i class="c x" style="left:550px;top:420px"></i>
<i class="c x" style="left:605px;top:420px"></i>
<i class="c x" style="left:660px;top:420px"></i>
<i class="c x" style="left:715px;top:420px"></i>
<i class="c x" style="left:770px;top:420px"></i>
<i class="c x" style="left:825px;top:420px"></i>
<i class="c x" style="left:880px;top:420px"></i>
<i class="c x" style="left:935px;top:420px"></i>
<i class="c x" style="left:990px;top:420px"></i>
<i class="c x" style="left:1045px;top:420px"></i>
<i class="c x" style="left:1100px;top:420px"></i>
<i class="c x" style="left:1155px;top:420px"></i>
<i class="c x" style="left:1210px;top:420px"></i>
<i class="c x" style="left:1265px;top:420px"></i>
<i class="c x" style="left:1320px;top:420px"></i>
<i class="c x" style="left:1375px;top:420px"></i>
<i class="c x" style="left:1430px;top:420px"></i>
<i class="c x" style="left:1485px;top:420px"></i>
<i class="c x" style="left:1540px;top:420px"></i>
<i class="c b" style="left:0px;top:450px"></i>
<i class="c b" style="left:55px;top:450px"></i>
<i class="c b" style="left:110px;top:450px"></i>
<i class="c b" style="left:165px;top:450px"></i>
<i class="c x" style="left:220px;top:450px"></i>
<i class="c x" style="left:275px;top:450px"></i>
<i class="c x" style="left:330px;top:450px"></i>
<i class="c x" style="left:385px;top:450px"></i>
<i class="c x" style="left:440px;top:450px"></i>
<i class="c x" style="left:495px;top:450px"></i>
<i class="c x" style="left:550px;top:450px"></i>
<i class="c x" style="left:605px;top:450px"></i>
<i class="c x" style="left:660px;top:450px"></i>
<i class="c x" style="left:715px;top:450px"></i>
<i class="c x" style="left:770px;top:450px"></i>
<i class="c x" style="left:825px;top:450px"></i>
<i class="c x" style="left:880px;top:450px"></i>
<i class="c x" style="left:935px;top:450px"></i>
<i class="c x" style="left:990px;top:450px"></i>
<i class="c x" style="left:1045px;top:450px"></i>
<i class="c x" style="left:1100px;top:450px"></i>
<i class="c x" style="left:1155px;top:450px"></i>
<i class="c x" style="left:1210px;top:450px"></i>
<i class="c x" style="left:1265px;top:450px"></i>
<i class="c x" style="left:1320px;top:450px"></i>
<i class="c x" style="left:1375px;top:450px"></i>
<i class="c x" style="left:1430px;top:450px"></i>
<i class="c x" style="left:1485px;top:450px"></i>
<i class="c x" style="left:1540px;top:450px"></i>
<i class="c x" style="left:0px;top:480px"></i>
<i class="c x" style="left:55px;top:480px"></i>
<i class="c x" style="left:110px;top:480px"></i>
<i class="c x" style="left:165px;top:480px"></i>
<i class="c x" style="left:220px;top:480px"></i>
<i class="c x" style="left:275px;top:480px"></i>
<i class="c x" style="left:330px;top:480px"></i>
<i class="c x" style="left:385px;top:480px"></i>
<i class="c x" style="left:440px;top:480px"></i>
<i class="c x" style="left:495px;top:480px"></i>
<i class="c x" style="left:550px;top:480px"></i>
<i class="c x" style="left:605px;top:480px"></i>
<i class="c x" style="left:660px;top:480px"></i>
<i class="c x" style="left:715px;top:480px"></i>
<i class="c x" style="left:770px;top:480px"></i>
<i class="c x" style="left:825px;top:480px"></i>
<i class="c x" style="left:880px;top:480px"></i>
<i class="c x" style="left:935px;top:480px"></i>
<i class="c x" style="left:990px;top:480px"></i>
<i class="c x" style="left:1045px;top:480px"></i>
<i class="c x" style="left:1100px;top:480px"></i>
<i class="c x" style="left:1155px;top:480px"></i>
<i class="c x" style="left:1210px;top:480px"></i>
<i class="c x" style="left:1265px;top:480px"></i>
<i class="c x" style="left:1320px;top:480px"></i>
<i class="c x" style="left:1375px;top:480px"></i>
<i class="c x" style="left:1430px;top:480px"></i>
<i class="c x" style="left:1485px;top:480px"></i>
<i class="c x" style="left:1540px;top:480px"></i>
<i class="c x" style="left:0px;top:510px"></i>
<i class="c x" style="left:55px;top:510px"></i>
<i class="c x" style="left:110px;top:510px"></i>
<i class="c x" style="left:165px;top:510px"></i>
<i class="c x" style="left:220px;top:510px"></i>
<i class="c x" style="left:275px;top:510px"></i>
<i class="c x" style="left:330px;top:510px"></i>
<i class="c x" style="left:385px;top:510px"></i>
<i class="c x" style="left:440px;top:510px"></i>
<i class="c x" style="left:495px;top:510px"></i>
<i class="c x" style="left:550px;top:510px"></i>
<i class="c x" style="left:605px;top:510px"></i>
<i class="c x" style="left:660px;top:510px"></i>
<i class="c x" style="left:715px;top:510px"></i>
<i class="c x" style="left:770px;top:510px"></i>
<i class="c x" style="left:825px;top:510px"></i>
<i class="c x" style="left:880px;top:510px"></i>
<i class="c x" style="left:935px;top:510px"></i>
<i class="c x" style="left:990px;top:510px"></i>
<i class="c x" style="left:1045px;top:510px"></i>
<i class="c x" style="left:1100px;top:510px"></i>
<i class="c x" style="left:1155px;top:510px"></i>
<i class="c x" style="left:1210px;top:510px"></i>
<i class="c x" style="left:1265px;top:510px"></i>
<i class="c x" style="left:1320px;top:510px"></i>
<i class="c x" style="left:1375px;top:510px"></i>
<i class="c x" style="left:1430px;top:510px"></i>
<i class="c x" style="left:1485px;top:510px"></i>
<i class="c x" style="left:1540px;top:510px"></i>
<i class="c x" style="left:0px;top:540px"></i>
<i class="c x" style="left:55px;top:540px"></i>
<i class="c x" style="left:110px;top:540px"></i>
<i class="c x" style="left:165px;top:540px"></i>
<i class="c x" style="left:220px;top:540px"></i>
<i class="c x" style="left:275px;top:540px"></i>
<i class="c x" style="left:330px;top:540px"></i>
<i class="c x" style="left:385px;top:540px"></i>
<i class="c x" style="left:440px;top:540px"></i>
<i class="c x" style="left:495px;top:540px"></i>
<i class="c x" style="left:550px;top:540px"></i>
<i class="c x" style="left:605px;top:540px"></i>
<i class="c x" style="left:660px;top:540px"></i>
<i class="c x" style="left:715px;top:540px"></i>
<i class="c x" style="left:770px;top:540px"></i>
<i class="c x" style="left:825px;top:540px"></i>
<i class="c x" style="left:880px;top:540px"></i>
<i class="c x" style="left:935px;top:540px"></i>
<i class="c x" style="left:990px;top:540px"></i>
<i class="c x" style="left:1045px;top:540px"></i>
<i class="c x" style="left:1100px;top:540px"></i>
<i class="c x" style="left:1155px;top:540px"></i>
<i class="c x" style="left:1210px;top:540px"></i>
<i class="c x" style="left:1265px;top:540px"></i>
<i class="c x" style="left:1320px;top:540px"></i>
<i class="c x" style="left:1375px;top:540px"></i>
<i class="c x" style="left:1430px;top:540px"></i>
<i class="c x" style="left:1485px;top:540px"></i>
<i class="c x" style="left:1540px;top:540px"></i>
<i class="c x" style="left:0px;top:570px"></i>
<i class="c x" style="left:55px;top:570px"></i>
<i class="c x" style="left:110px;top:570px"></i>
<i class="c x" style="left:165px;top:570px"></i>
<i class="c x" style="left:220px;top:570px"></i>
<i class="c x" style="left:275px;top:570px"></i>
<i class="c x" style="left:330px;top:570px"></i>
<i class="c x" style="left:385px;top:570px"></i>
<i class="c x" style="left:440px;top:570px"></i>
<i class="c x" style="left:495px;top:570px"></i>
<i class="c x" style="left:550px;top:570px"></i>
<i class="c x" style="left:605px;top:570px"></i>
<i class="c x" style="left:660px;top:570px"></i>
<i class="c x" style="left:715px;top:570px"></i>
<i class="c x" style="left:770px;top:570px"></i>
<i class="c x" style="left:825px;top:570px"></i>
<i class="c x" style="left:880px;top:570px"></i>
<i class="c x" style="left:935px;top:570px"></i>
<i class="c x" style="left:990px;top:570px"></i>
<i class="c x" style="left:1045px;top:570px"></i>
<i class="c x" style="left:1100px;top:570px"></i>
<i class="c x" style="left:1155px;top:570px"></i>
<i class="c x" style="left:1210px;top:570px"></i>
<i class="c x" style="left:1265px;top:570px"></i>
<i class="c x" style="left:1320px;top:570px"></i>
<i class="c x" style="left:1375px;top:570px"></i>
<i class="c x" style="left:1430px;top:570px"></i>
<i class="c x" style="left:1485px;top:570px"></i>
<i class="c x" style="left:1540px;top:570px"></i>
<i class="c x" style="left:0px;top:600px"></i>
<i class="c x" style="left:55px;top:600px"></i>
<i class="c x" style="left:110px;top:600px"></i>
<i class="c x" style="left:165px;top:600px"></i>
<i class="c x" style="left:220px;top:600px"></i>
<i class="c x" style="left:275px;top:600px"></i>
<i class="c x" style="left:330px;top:600px"></i>
<i class="c x" style="left:385px;top:600px"></i>
<i class="c x" style="left:440px;top:600px"></i>
<i class="c x" style="left:495px;top:600px"></i>
<i class="c x" style="left:550px;top:600px"></i>
<i class="c x" style="left:605px;top:600px"></i>
<i class="c x" style="left:660px;top:600px"></i>
<i class="c x" style="left:715px;top:600px"></i>
<i class="c x" style="left:770px;top:600px"></i>
<i class="c x" style="left:825px;top:600px"></i>
<i class="c x" style="left:880px;top:600px"></i>
<i class="c x" style="left:935px;top:600px"></i>
<i class="c x" style="left:990px;top:600px"></i>
<i class="c x" style="left:1045px;top:600px"></i>
<i class="c x" style="left:1100px;top:600px"></i>
<i class="c x" style="left:1155px;top:600px"></i>
<i class="c x" style="left:1210px;top:600px"></i>
<i class="c x" style="left:1265px;top:600px"></i>
<i class="c x" style="left:1320px;top:600px"></i>
<i class="c x" style="left:1375px;top:600px"></i>
<i class="c x" style="left:1430px;top:600px"></i>
<i class="c x" style="left:1485px;top:600px"></i>
<i class="c x" style="left:1540px;top:600px"></i>
</div>
</div>
<div id="hb"></div>
<div id="lb"></div>
<div id="lpb"></div><div id="rb"></div><div id="bb"></div>
<div id="vs"><div class="abs" style="left:2px;top:17px;width:13px;height:613px;background:#c1c1c1"></div><svg class="abs" style="left:4px;top:6px" width="9" height="6" viewBox="0 0 9 6"><path d="M0.5 5.5 L4.5 1 L8.5 5.5 z" fill="#a3a3a3"/></svg></div>
<div id="hs1"><svg class="abs" style="left:5px;top:5px" width="6" height="9" viewBox="0 0 6 9"><path d="M5.5 0.5 L1 4.5 L5.5 8.5 z" fill="#a3a3a3"/></svg><svg class="abs" style="left:298px;top:5px" width="6" height="9" viewBox="0 0 6 9"><path d="M0.5 0.5 L5 4.5 L0.5 8.5 z" fill="#a3a3a3"/></svg></div>
<div id="hs2"><svg class="abs" style="left:5px;top:5px" width="6" height="9" viewBox="0 0 6 9"><path d="M5.5 0.5 L1 4.5 L5.5 8.5 z" fill="#505050"/></svg><div class="abs" style="left:371px;top:3px;width:531px;height:12px;background:#c1c1c1"></div></div>
<div id="legend">
  <div class="lh">LEGEND</div>
  <div class="abs" style="left:254px;top:11px;width:20px;height:20px;border-radius:50%;background:#ececec"><svg class="abs" style="left:5px;top:4px" width="10" height="12" viewBox="0 0 10 12"><path d="M5 1 v9 M1.5 6.5 L5 10 L8.5 6.5" fill="none" stroke="#777" stroke-width="1.3"/></svg></div>
  <div class="abs" style="left:0;top:42px;width:300px;height:1px;background:#e0e0e0"></div>
  <div class="dot" style="top:60px;border:1px solid #bbb;background:#fff"></div><div class="li" style="top:59px">Activity not applicable</div>
  <div class="dot" style="top:82px;background:#bdbdbd"></div><div class="li" style="top:81px">Not started</div>
  <div class="dot" style="left:18px;top:104px;background:repeating-linear-gradient(-45deg,#7fc4fd 0,#7fc4fd 2px,#fff 2px,#fff 3.4px)"></div><div class="li" style="top:103px">Available - All predecessors finished</div>
  <div class="dot" style="top:126px;background:#7fc4fd"></div><div class="li" style="top:125px">Started</div>
  <div class="dot" style="left:18px;top:148px;background:repeating-linear-gradient(-45deg,#78eb99 0,#78eb99 2px,#fff 2px,#fff 3.4px)"></div><div class="li" style="top:147px">Waiting for confirmation</div>
  <svg class="abs" style="left:17px;top:170px" width="12" height="12" viewBox="0 0 12 12"><circle cx="6" cy="6" r="5" fill="none" stroke="#ff7f7f" stroke-width="1.3"/><path d="M2.3 2.3 L9.7 9.7 M9.7 2.3 L2.3 9.7" stroke="#ff7f7f" stroke-width="1.4"/></svg><div class="li" style="top:169px">Rejected</div>
  <div class="dot" style="top:192px;background:#78eb99"></div><div class="li" style="top:191px">Finished &amp; Confirmed</div>
  <div class="abs" style="left:16px;top:213px;width:248px;height:1px;background:#dedede"></div>
  <div class="abs" style="left:17px;top:224px;width:20px;height:18px;border:1px solid #f5c518;border-radius:3px;background:#fff6c4"><svg class="abs" style="left:4px;top:4px" width="10" height="9" viewBox="0 0 10 9"><path d="M5 0.5 L9.5 8.5 H0.5 z" fill="#f5a800"/></svg></div>
  <div class="li" style="left:41px;top:225px">Quality issue |</div>
  <div class="abs" style="left:119px;top:224px;width:20px;height:18px;border:1px solid #d33;border-radius:3px;background:#fde0e0"><svg class="abs" style="left:4px;top:3px" width="11" height="11" viewBox="0 0 11 11"><path d="M1 4 L7 10 M1 1 L10 10 M4 1 L10 7" stroke="#e55" stroke-width="1"/></svg></div>
  <div class="li" style="left:143px;top:225px">Obstruction</div>
</div>
</body></html>
